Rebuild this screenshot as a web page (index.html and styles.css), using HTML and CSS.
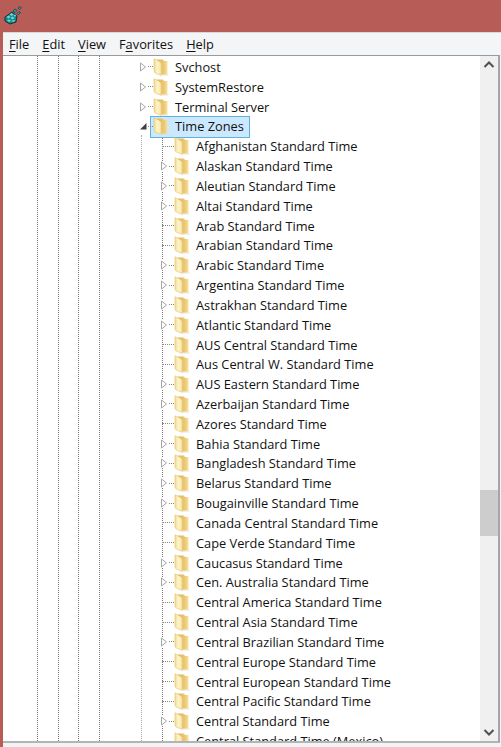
FILE: index.html
```html
<!DOCTYPE html>
<html lang="en">
<head>
<meta charset="utf-8">
<title>Registry Editor</title>
<link rel="stylesheet" href="styles.css">
</head>
<body>
<svg width="0" height="0" class="defs">
  <defs>
    <linearGradient id="fg" x1="0" y1="0" x2="1" y2="0">
      <stop offset="0" stop-color="#f3d98e"/>
      <stop offset="0.45" stop-color="#fdf4cb"/>
      <stop offset="1" stop-color="#f8e6a6"/>
    </linearGradient>
    <linearGradient id="bg" x1="0" y1="0" x2="1" y2="0">
      <stop offset="0" stop-color="#dcb457"/>
      <stop offset="0.7" stop-color="#ecca76"/>
      <stop offset="1" stop-color="#f7e3a3"/>
    </linearGradient>
    <symbol id="folder" viewBox="0 0 16 18">
      <path d="M8 17.500h7.500v-1H8z" fill="#d9d6cc" opacity=".7"/>
      <path d="M4 1.500h6l1 1.500h3.500v13.500H7z" fill="url(#bg)"/>
      <path d="M1 .8l5 2.400c1.600.9 2.200 1.700 2.200 3.300v10.800l-4.800-1.800C1.800 14.900 1 14 1 12.700z" fill="url(#fg)" stroke="#e6c770" stroke-width=".7"/>
    </symbol>
    <symbol id="open" viewBox="0 0 9 10">
      <path d="M1.500 1l5 4-5 4z" fill="#fff" stroke="#a6a6a6" stroke-width="1"/>
    </symbol>
  </defs>
</svg>
<div class="window">
  <header class="titlebar">
    <svg class="appicon" width="20" height="20" viewBox="0 0 20 20">
      <path d="M1 12l7-5 5 4-1 6-6 2-5-3z" fill="#17898c" stroke="#1f2a33" stroke-width="1"/>
      <path d="M2.500 12l2-1.500 2 1.500-2 1.500zM6.500 13l2-1.500 2 1.500-2 1.500zM5.500 9.500l2-1.500 2 1.500-2 1.500zM9.500 10.500l1.500-1 1.200 1-1.500 1.200zM3 15.500l2-1 2 1-2 1.500zM7.500 16l2-1 1.800.5-2 1.500z" fill="#63dcd2"/>
      <path d="M9 6l2-2 2 1.500-2 2zM14 3l2-1.500 1.500 1.500-2 1.500zM13 8.500l2-2 1.500 1-2 2z" fill="#20a7a6" stroke="#1f2a33" stroke-width=".7"/>
    </svg>
  </header>
  <div class="frame">
    <nav class="menubar">
      <span class="menu"><u>F</u>ile</span>
      <span class="menu"><u>E</u>dit</span>
      <span class="menu"><u>V</u>iew</span>
      <span class="menu">F<u>a</u>vorites</span>
      <span class="menu"><u>H</u>elp</span>
    </nav>
    <div class="pane">
      <div class="tree">
        <i class="guide g1"></i><i class="guide g2"></i><i class="guide g3"></i><i class="guide g4"></i><i class="guide g5"></i>
        <i class="guide g6"></i>
        <ul class="rows">
          <li class="row l1"><svg class="arrow"><use href="#open"/></svg><i class="dash"></i><svg class="fold"><use href="#folder"/></svg><span>Svchost</span></li>
          <li class="row l1"><svg class="arrow"><use href="#open"/></svg><i class="dash"></i><svg class="fold"><use href="#folder"/></svg><span>SystemRestore</span></li>
          <li class="row l1"><svg class="arrow"><use href="#open"/></svg><i class="dash"></i><svg class="fold"><use href="#folder"/></svg><span>Terminal Server</span></li>
          <li class="row l1 sel"><svg class="arrow" viewBox="0 0 9 10"><path d="M1 8.500h6.500v-6.500z" fill="#404040"/></svg><i class="dash"></i><svg class="fold"><use href="#folder"/></svg><span>Time Zones</span></li>
          <li class="row leaf"><i class="dash"></i><svg class="fold"><use href="#folder"/></svg><span>Afghanistan Standard Time</span></li>
          <li class="row l2"><svg class="arrow"><use href="#open"/></svg><i class="dash"></i><svg class="fold"><use href="#folder"/></svg><span>Alaskan Standard Time</span></li>
          <li class="row l2"><svg class="arrow"><use href="#open"/></svg><i class="dash"></i><svg class="fold"><use href="#folder"/></svg><span>Aleutian Standard Time</span></li>
          <li class="row l2"><svg class="arrow"><use href="#open"/></svg><i class="dash"></i><svg class="fold"><use href="#folder"/></svg><span>Altai Standard Time</span></li>
          <li class="row leaf"><i class="dash"></i><svg class="fold"><use href="#folder"/></svg><span>Arab Standard Time</span></li>
          <li class="row leaf"><i class="dash"></i><svg class="fold"><use href="#folder"/></svg><span>Arabian Standard Time</span></li>
          <li class="row l2"><svg class="arrow"><use href="#open"/></svg><i class="dash"></i><svg class="fold"><use href="#folder"/></svg><span>Arabic Standard Time</span></li>
          <li class="row l2"><svg class="arrow"><use href="#open"/></svg><i class="dash"></i><svg class="fold"><use href="#folder"/></svg><span>Argentina Standard Time</span></li>
          <li class="row l2"><svg class="arrow"><use href="#open"/></svg><i class="dash"></i><svg class="fold"><use href="#folder"/></svg><span>Astrakhan Standard Time</span></li>
          <li class="row l2"><svg class="arrow"><use href="#open"/></svg><i class="dash"></i><svg class="fold"><use href="#folder"/></svg><span>Atlantic Standard Time</span></li>
          <li class="row leaf"><i class="dash"></i><svg class="fold"><use href="#folder"/></svg><span>AUS Central Standard Time</span></li>
          <li class="row leaf"><i class="dash"></i><svg class="fold"><use href="#folder"/></svg><span>Aus Central W. Standard Time</span></li>
          <li class="row l2"><svg class="arrow"><use href="#open"/></svg><i class="dash"></i><svg class="fold"><use href="#folder"/></svg><span>AUS Eastern Standard Time</span></li>
          <li class="row l2"><svg class="arrow"><use href="#open"/></svg><i class="dash"></i><svg class="fold"><use href="#folder"/></svg><span>Azerbaijan Standard Time</span></li>
          <li class="row leaf"><i class="dash"></i><svg class="fold"><use href="#folder"/></svg><span>Azores Standard Time</span></li>
          <li class="row l2"><svg class="arrow"><use href="#open"/></svg><i class="dash"></i><svg class="fold"><use href="#folder"/></svg><span>Bahia Standard Time</span></li>
          <li class="row l2"><svg class="arrow"><use href="#open"/></svg><i class="dash"></i><svg class="fold"><use href="#folder"/></svg><span>Bangladesh Standard Time</span></li>
          <li class="row l2"><svg class="arrow"><use href="#open"/></svg><i class="dash"></i><svg class="fold"><use href="#folder"/></svg><span>Belarus Standard Time</span></li>
          <li class="row l2"><svg class="arrow"><use href="#open"/></svg><i class="dash"></i><svg class="fold"><use href="#folder"/></svg><span>Bougainville Standard Time</span></li>
          <li class="row leaf"><i class="dash"></i><svg class="fold"><use href="#folder"/></svg><span>Canada Central Standard Time</span></li>
          <li class="row leaf"><i class="dash"></i><svg class="fold"><use href="#folder"/></svg><span>Cape Verde Standard Time</span></li>
          <li class="row l2"><svg class="arrow"><use href="#open"/></svg><i class="dash"></i><svg class="fold"><use href="#folder"/></svg><span>Caucasus Standard Time</span></li>
          <li class="row l2"><svg class="arrow"><use href="#open"/></svg><i class="dash"></i><svg class="fold"><use href="#folder"/></svg><span>Cen. Australia Standard Time</span></li>
          <li class="row leaf"><i class="dash"></i><svg class="fold"><use href="#folder"/></svg><span>Central America Standard Time</span></li>
          <li class="row leaf"><i class="dash"></i><svg class="fold"><use href="#folder"/></svg><span>Central Asia Standard Time</span></li>
          <li class="row l2"><svg class="arrow"><use href="#open"/></svg><i class="dash"></i><svg class="fold"><use href="#folder"/></svg><span>Central Brazilian Standard Time</span></li>
          <li class="row leaf"><i class="dash"></i><svg class="fold"><use href="#folder"/></svg><span>Central Europe Standard Time</span></li>
          <li class="row leaf"><i class="dash"></i><svg class="fold"><use href="#folder"/></svg><span>Central European Standard Time</span></li>
          <li class="row leaf"><i class="dash"></i><svg class="fold"><use href="#folder"/></svg><span>Central Pacific Standard Time</span></li>
          <li class="row l2"><svg class="arrow"><use href="#open"/></svg><i class="dash"></i><svg class="fold"><use href="#folder"/></svg><span>Central Standard Time</span></li>
          <li class="row leaf"><i class="dash"></i><svg class="fold"><use href="#folder"/></svg><span>Central Standard Time (Mexico)</span></li>
        </ul>
      </div>
      <div class="scrollbar">
        <svg class="chev" width="18" height="18" viewBox="0 0 18 18"><path d="M4.500 11l4.500-4.500 4.500 4.500" fill="none" stroke="#505050" stroke-width="2"/></svg>
        <div class="track"><div class="thumb"></div></div>
        <svg class="chev" width="18" height="18" viewBox="0 0 18 18"><path d="M4.500 7l4.500 4.500 4.500-4.500" fill="none" stroke="#505050" stroke-width="2"/></svg>
      </div>
    </div>
  </div>
</div>
</body>
</html>
```
FILE: styles.css
```css
* { box-sizing: border-box; }
html, body { margin: 0; padding: 0; height: 100%; }
body { background: #b85c58; font-family: "Open Sans", "Noto Sans", sans-serif; color: #111; overflow: hidden; }
.defs { display: block; height: 0; width: 0; }
.window { display: flex; flex-direction: column; height: 747px; width: 501px; }
.titlebar { height: 32px; flex: none; display: flex; align-items: center; padding-left: 4px; padding-bottom: 2px; }
.appicon { display: block; }
.frame { flex: 1; min-height: 0; margin-left: 3px; background: #f1f3f5; display: flex; flex-direction: column; padding-bottom: 4px; }
.menubar { height: 23px; flex: none; display: flex; align-items: center; gap: 13px; padding: 0 0 1px 6px; font-size: 12.8px; background: #f3f5f7; border-top: 1px solid #d9d9d9; }
u { text-underline-offset: 2px; text-decoration-thickness: 1px; }
.pane { flex: 1; min-height: 0; display: flex; background: #fff; border-top: 1px solid #9a9a9a; border-right: 2px solid #a6a6aa; border-bottom: 2px solid #b4b4b4; margin-right: 1px; overflow: hidden; }
.tree { flex: 1; min-width: 0; position: relative; overflow: hidden; }
.guide { position: absolute; top: 0; bottom: 0; width: 0; border-left: 1px dotted #777; }
.g1 { left: 34px; }
.g2 { left: 55px; }
.g3 { left: 75px; }
.g4 { left: 96px; }
.g5 { left: 138px; border-left-color: #aaa; top: 79px; }
.g6 { left: 159px; top: 80px; }
.rows { list-style: none; margin: 0; padding: 1px 0 0; position: relative; }
.row { height: 19.83px; display: flex; align-items: center; font-size: 12.8px; white-space: nowrap; position: relative; }
.row span { padding: 0 3px 0 6px; line-height: 18px; }
.l1 { padding-left: 136px; }
.l2 { padding-left: 157px; }
.leaf { padding-left: 159px; }
.arrow { width: 9px; height: 10px; flex: none; background: #fff; }
.dash { width: 5px; height: 0; flex: none; border-top: 1px dotted #888; }
.leaf .dash { width: 12px; }
.fold { width: 16px; height: 18px; flex: none; background: transparent; }
.sel::before { content: ""; position: absolute; left: 147px; width: 98px; top: 0; height: 20px; background: #cce8ff; border: 1px solid #5fb2e0; }
.sel > * { position: relative; }
.scrollbar { width: 18px; flex: none; background: #f0f0f0; display: flex; flex-direction: column; }
.chev { display: block; flex: none; }
.track { flex: 1; min-height: 0; padding-top: 416px; }
.thumb { height: 46px; background: #cdcdcd; }
```
